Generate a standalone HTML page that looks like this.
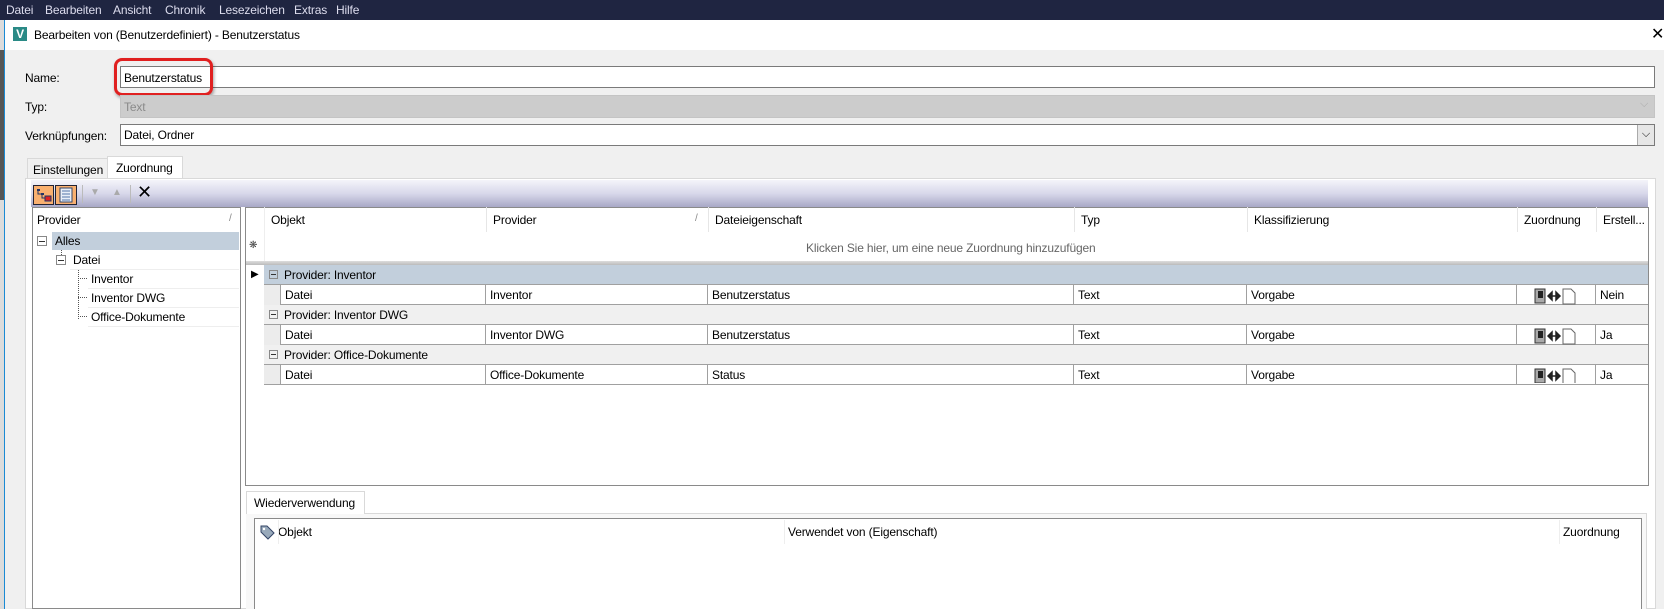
<!DOCTYPE html>
<html><head><meta charset="utf-8"><style>
*{box-sizing:border-box;margin:0;padding:0}
body{width:1664px;height:609px;overflow:hidden;background:#f0f0f0;font-family:"Liberation Sans",sans-serif;font-size:12px;letter-spacing:-0.15px;color:#000;position:relative}
.a{position:absolute}
.menu{left:0;top:0;width:1664px;height:20px;background:#1f2541;color:#dde;font-size:12px}
.menu span{position:absolute;top:3px}
.title{left:5px;top:20px;width:1659px;height:30px;background:#fff}
.inp{background:#fff;border:1px solid #7a7a7a}
.lbl{font-size:12px}
.tx{white-space:nowrap}
.cell{position:absolute;height:20px;border-right:1px solid #a0a0a0;border-bottom:1px solid #a0a0a0;background:#fff;padding:3px 4px;white-space:nowrap}
.grp{position:absolute;height:20px;border-bottom:1px solid #a0a0a0;padding:3px 0 0 20px}
.box{display:inline-block;width:9px;height:9px;border:1px solid #888;position:absolute;left:5px;top:5px}
.box:after{content:"";position:absolute;left:1px;top:3px;width:5px;height:1px;background:#333}
.hd{position:absolute;top:207px;height:25px;padding:6px 6px;border-left:1px solid #e6e6e6}
</style></head><body>
<div class="a menu">
<span style="left:6px">Datei</span><span style="left:45px">Bearbeiten</span><span style="left:113px">Ansicht</span><span style="left:165px">Chronik</span><span style="left:219px">Lesezeichen</span><span style="left:294px">Extras</span><span style="left:336px">Hilfe</span>
</div>
<div class="a" style="left:0;top:20px;width:5px;height:589px;background:#dcdcdc"></div>
<div class="a" style="left:0;top:50px;width:4px;height:150px;background:#555"></div>
<div class="a" style="left:4px;top:20px;width:1px;height:589px;background:#1a8ad4"></div>
<div class="a title">
<div class="a" style="left:8px;top:7px;width:14px;height:14px;background:#2a8a86;color:#fff;font-weight:bold;font-size:12px;line-height:14px;text-align:center">V</div>
<div class="a tx" style="left:29px;top:8px;font-size:12px">Bearbeiten von (Benutzerdefiniert) - Benutzerstatus</div>
<div class="a" style="left:1646px;top:4px;font-size:16px">✕</div>
</div>
<div class="a lbl" style="left:25px;top:71px">Name:</div>
<div class="a inp" style="left:120px;top:66px;width:1535px;height:22px"></div>
<div class="a tx" style="left:124px;top:71px">Benutzerstatus</div>
<div class="a" style="left:114px;top:58px;width:99px;height:38px;border:3px solid #e02020;border-radius:8px;box-shadow:1px 2px 3px rgba(0,0,0,.35)"></div>
<div class="a lbl" style="left:25px;top:100px">Typ:</div>
<div class="a" style="left:120px;top:95px;width:1535px;height:23px;background:#cccccc;border:1px solid #c4c4c4"></div>
<div class="a tx" style="left:124px;top:100px;color:#8a8a8a">Text</div>
<div class="a" style="left:1640px;top:98px;color:#aaa;font-size:11px">⌵</div>
<div class="a lbl" style="left:25px;top:129px">Verknüpfungen:</div>
<div class="a inp" style="left:120px;top:124px;width:1535px;height:22px"></div>
<div class="a tx" style="left:124px;top:128px">Datei, Ordner</div>
<div class="a" style="left:1637px;top:125px;width:17px;height:20px;background:#e6e6e6;border-left:1px solid #aaa;text-align:center;font-size:11px;padding-top:3px">⌵</div>
<!-- tabs -->
<div class="a" style="left:27px;top:158px;width:81px;height:20px;border:1px solid #d9d9d9;border-bottom:none;padding:4px 0 0 5px">Einstellungen</div>
<div class="a" style="left:107px;top:156px;width:76px;height:23px;background:#fff;border:1px solid #d9d9d9;border-bottom:none;padding:4px 0 0 8px">Zuordnung</div>
<div class="a" style="left:25px;top:178px;width:1631px;height:431px;background:#fff;border:1px solid #d9d9d9"></div>
<!-- toolbar -->
<div class="a" style="left:31px;top:180px;width:1617px;height:27px;background:linear-gradient(#f4f4fa,#d8d8ea 50%,#a8a8c6)"></div>
<div class="a" style="left:33px;top:185px;width:21px;height:20px;background:#f9b070;border:1px solid #223"></div>
<svg class="a" style="left:36px;top:188px" width="16" height="14"><rect x="1" y="1" width="3" height="2" fill="#236"/><rect x="5" y="5" width="3" height="2" fill="#236"/><rect x="9" y="8" width="6" height="5" fill="#d22" stroke="#236"/><path d="M2 3v3h3M6 7v3h3" stroke="#236" fill="none"/></svg>
<div class="a" style="left:55px;top:185px;width:22px;height:20px;background:#f9b070;border:1px solid #223"></div>
<svg class="a" style="left:59px;top:187px" width="14" height="16"><rect x="1" y="1" width="12" height="14" fill="#e8eef8" stroke="#346"/><path d="M3 4h8M3 7h8M3 10h8M3 13h8" stroke="#57a"/></svg>
<div class="a" style="left:82px;top:185px;width:1px;height:18px;background:#bbb"></div>
<div class="a" style="left:90px;top:187px;color:#aaa;font-size:10px">▼</div>
<div class="a" style="left:112px;top:187px;color:#aaa;font-size:10px">▲</div>
<div class="a" style="left:130px;top:185px;width:1px;height:18px;background:#bbb"></div>
<div class="a" style="left:137px;top:182px;font-size:18px">✕</div>
<!-- left tree -->
<div class="a" style="left:32px;top:207px;width:209px;height:402px;border:1px solid #8a8a8a;background:#fff"></div>
<div class="a" style="left:37px;top:213px;font-size:12px">Provider</div>
<div class="a" style="left:229px;top:213px;color:#888;font-size:10px">/</div>
<div class="a" style="left:52px;top:232px;width:187px;height:18px;background:#c2cfdc"></div>
<div class="a" style="left:37px;top:236px;width:10px;height:10px;border:1px solid #888"></div><div class="a" style="left:39px;top:241px;width:6px;height:1px;background:#333"></div>
<div class="a" style="left:55px;top:234px">Alles</div>
<div class="a" style="left:56px;top:255px;width:10px;height:10px;border:1px solid #888"></div><div class="a" style="left:58px;top:260px;width:6px;height:1px;background:#333"></div>
<div class="a" style="left:73px;top:253px">Datei</div>
<div class="a" style="left:61px;top:250px;height:5px;border-left:1px dotted #555"></div>
<div class="a" style="left:78px;top:269px;height:50px;border-left:1px dotted #555"></div>
<div class="a" style="left:78px;top:278px;width:9px;border-top:1px dotted #555"></div>
<div class="a" style="left:78px;top:297px;width:9px;border-top:1px dotted #555"></div>
<div class="a" style="left:78px;top:316px;width:9px;border-top:1px dotted #555"></div>
<div class="a" style="left:70px;top:269px;width:169px;border-top:1px solid #eee"></div>
<div class="a" style="left:88px;top:288px;width:151px;border-top:1px solid #eee"></div>
<div class="a" style="left:88px;top:307px;width:151px;border-top:1px solid #eee"></div>
<div class="a" style="left:88px;top:326px;width:151px;border-top:1px solid #eee"></div>
<div class="a" style="left:91px;top:272px">Inventor</div>
<div class="a" style="left:91px;top:291px">Inventor DWG</div>
<div class="a" style="left:91px;top:310px">Office-Dokumente</div>
<!-- right grid -->
<div class="a" style="left:245px;top:207px;width:1404px;height:279px;border:1px solid #8a8a8a;background:#fff"></div>
<div class="hd" style="left:264px">Objekt</div>
<div class="hd" style="left:486px">Provider</div>
<div class="a" style="left:695px;top:213px;color:#888;font-size:10px">/</div>
<div class="hd" style="left:708px">Dateieigenschaft</div>
<div class="hd" style="left:1074px">Typ</div>
<div class="hd" style="left:1247px">Klassifizierung</div>
<div class="hd" style="left:1517px">Zuordnung</div>
<div class="hd" style="left:1596px">Erstell...</div>
<div class="a" style="left:264px;top:208px;width:1px;height:54px;background:#eee"></div>
<div class="a" style="left:249px;top:240px;font-size:10px;color:#444">❋</div>
<div class="a tx" style="left:806px;top:241px;color:#666">Klicken Sie hier, um eine neue Zuordnung hinzuzufügen</div>
<div class="a" style="left:246px;top:261px;width:1402px;height:4px;background:linear-gradient(#ddd,#bbb)"></div>
<div class="a" style="left:251px;top:269px;font-size:10px">▶</div>
<div class="grp" style="left:264px;top:265px;width:1384px;background:#c2cfdc"><span class="box"></span>Provider: Inventor</div>
<div class="grp" style="left:264px;top:305px;width:1384px;background:#f0f0f0"><span class="box"></span>Provider: Inventor DWG</div>
<div class="grp" style="left:264px;top:345px;width:1384px;background:#f0f0f0"><span class="box"></span>Provider: Office-Dokumente</div>
<!-- data rows -->
<div class="a" style="left:264px;top:285px;width:16px;height:20px;background:#ececec"></div>
<div class="a" style="left:264px;top:325px;width:16px;height:20px;background:#ececec"></div>
<div class="a" style="left:264px;top:365px;width:16px;height:20px;background:#ececec;border-bottom:1px solid #a0a0a0"></div>
<div class="cell" style="left:280px;top:285px;width:206px;border-left:1px solid #a0a0a0">Datei</div><div class="cell" style="left:486px;top:285px;width:222px">Inventor</div><div class="cell" style="left:708px;top:285px;width:366px">Benutzerstatus</div><div class="cell" style="left:1074px;top:285px;width:173px">Text</div><div class="cell" style="left:1247px;top:285px;width:270px">Vorgabe</div><div class="cell" style="left:1517px;top:285px;width:79px"></div><div class="cell" style="left:1596px;top:285px;width:52px;border-right:none">Nein</div>
<div class="cell" style="left:280px;top:325px;width:206px;border-left:1px solid #a0a0a0">Datei</div><div class="cell" style="left:486px;top:325px;width:222px">Inventor DWG</div><div class="cell" style="left:708px;top:325px;width:366px">Benutzerstatus</div><div class="cell" style="left:1074px;top:325px;width:173px">Text</div><div class="cell" style="left:1247px;top:325px;width:270px">Vorgabe</div><div class="cell" style="left:1517px;top:325px;width:79px"></div><div class="cell" style="left:1596px;top:325px;width:52px;border-right:none">Ja</div>
<div class="cell" style="left:280px;top:365px;width:206px;border-left:1px solid #a0a0a0">Datei</div><div class="cell" style="left:486px;top:365px;width:222px">Office-Dokumente</div><div class="cell" style="left:708px;top:365px;width:366px">Status</div><div class="cell" style="left:1074px;top:365px;width:173px">Text</div><div class="cell" style="left:1247px;top:365px;width:270px">Vorgabe</div><div class="cell" style="left:1517px;top:365px;width:79px"></div><div class="cell" style="left:1596px;top:365px;width:52px;border-right:none">Ja</div>
<svg class="a" style="left:1534px;top:287px" width="46" height="96">
<defs><g id="ic"><rect x="1" y="1" width="10" height="14" fill="#aaa" stroke="#333"/><rect x="4" y="3" width="5" height="7" fill="#222"/><path d="M14 8h12M14 8l4-4v8zM26 8l-4-4v8z" fill="#222" stroke="#222" stroke-width="1.5"/><path d="M29 1h8l4 4v11h-12z" fill="#fff" stroke="#666"/></g></defs>
<use href="#ic" x="0" y="1"/><use href="#ic" x="0" y="41"/><use href="#ic" x="0" y="81"/>
</svg>
<!-- lower -->
<div class="a" style="left:246px;top:513px;width:1401px;height:96px;border-top:1px solid #d9d9d9;border-right:1px solid #d9d9d9;background:#f8f8f8"></div>
<div class="a" style="left:246px;top:491px;width:119px;height:23px;background:#fff;border:1px solid #d9d9d9;border-bottom:none;padding:4px 0 0 7px">Wiederverwendung</div>
<div class="a" style="left:254px;top:518px;width:1388px;height:91px;border:1px solid #8a8a8a;border-bottom:none;background:#fff"></div>
<svg class="a" style="left:259px;top:524px" width="16" height="16"><path d="M2 2l6 0 7 7-6 6-7-7z" fill="#9ab" stroke="#346"/><circle cx="5" cy="5" r="1.2" fill="#fff"/></svg>
<div class="a" style="left:278px;top:525px">Objekt</div>
<div class="a" style="left:278px;top:520px;width:1px;height:24px;background:#eee"></div>
<div class="a" style="left:784px;top:520px;width:1px;height:24px;background:#eee"></div>
<div class="a" style="left:788px;top:525px">Verwendet von (Eigenschaft)</div>
<div class="a" style="left:1559px;top:520px;width:1px;height:24px;background:#eee"></div>
<div class="a" style="left:1563px;top:525px">Zuordnung</div>
</body></html>
